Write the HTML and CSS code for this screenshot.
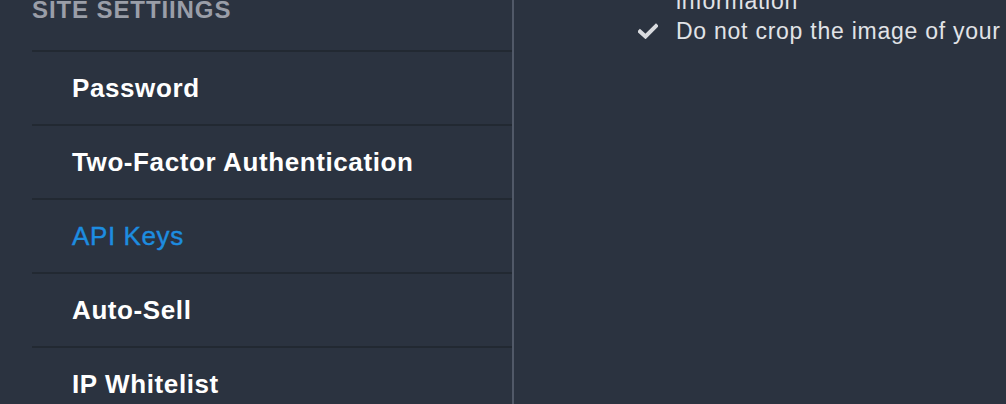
FILE: index.html
```html
<!DOCTYPE html>
<html lang="en">
<head>
<meta charset="utf-8">
<title>Site Settings</title>
<link rel="stylesheet" href="styles.css">
</head>
<body>
<div class="layout">
  <aside class="sidebar">
    <h2 class="sidebar-title">SITE SETTIINGS</h2>
    <nav class="menu">
      <a class="menu-item" href="#">Password</a>
      <a class="menu-item" href="#">Two-Factor Authentication</a>
      <a class="menu-item active" href="#">API Keys</a>
      <a class="menu-item" href="#">Auto-Sell</a>
      <a class="menu-item" href="#">IP Whitelist</a>
    </nav>
  </aside>
  <main class="content">
    <ul class="rules">
      <li class="rule rule-cont"><span class="rule-text">information</span></li>
      <li class="rule">
        <svg class="check" viewBox="0 0 20 16" aria-hidden="true"><path d="M2 8.5 L7.5 13.5 L18 3" fill="none" stroke="currentColor" stroke-width="4" stroke-linecap="square" stroke-linejoin="miter"/></svg>
        <span class="rule-text">Do not crop the image of your ID document</span>
      </li>
    </ul>
  </main>
</div>
</body>
</html>
```

FILE: styles.css
```css
* { box-sizing: border-box; }
html, body {
  margin: 0;
  padding: 0;
  background: #2b3340;
  overflow: hidden;
}
body {
  font-family: "Liberation Sans", Arial, sans-serif;
  color: #ffffff;
  width: 1006px;
  height: 404px;
}
.layout {
  display: flex;
  height: 404px;
}
.sidebar {
  width: 514px;
  flex: none;
  padding-left: 32px;
  border-right: 2px solid #515968;
}
.sidebar-title {
  margin: 0;
  height: 50px;
  font-size: 24px;
  font-weight: 700;
  color: #9a9ea8;
  letter-spacing: 0.9px;
  line-height: 1;
  margin-top: -2px;
  padding: 0;
}
.menu {
  display: flex;
  flex-direction: column;
  margin-top: 2px;
}
.menu-item {
  display: flex;
  align-items: center;
  height: 74px;
  padding-left: 40px;
  border-top: 2px solid #222932;
  color: #ffffff;
  text-decoration: none;
  font-size: 26px;
  font-weight: 700;
  letter-spacing: 0.6px;
}
.menu-item.active {
  color: #1d8de0;
  font-weight: 400;
  -webkit-text-stroke: 0.4px #1d8de0;
}
.content {
  flex: 1;
  padding-left: 124px;
}
.rules {
  list-style: none;
  margin: 0;
  padding: 0;
  margin-top: -14px;
}
.rule {
  display: flex;
  align-items: center;
  height: 30px;
  color: #e1e3e7;
  font-size: 23px;
  letter-spacing: 0.75px;
  white-space: nowrap;
}
.rule-cont { padding-left: 38px; }
.check {
  width: 20px;
  height: 16px;
  color: #d9dbdf;
  margin-right: 18px;
  flex: none;
}
```
